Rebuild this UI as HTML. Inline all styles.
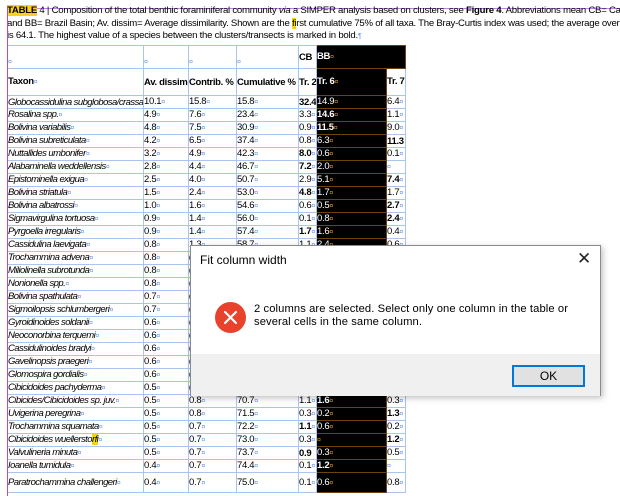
<!DOCTYPE html>
<html><head><meta charset="utf-8"><style>
*{margin:0;padding:0;box-sizing:border-box}
body{width:620px;height:496px;overflow:hidden;background:#fff;font-family:"Liberation Sans",Arial,sans-serif;color:#000;position:relative}
.cap{position:absolute;left:7px;top:5px;width:640px;font-size:9.6px;line-height:12.6px;letter-spacing:-0.25px;white-space:nowrap}
.hl{background:#f7d21c}
.vl{position:absolute;left:7px;top:8px;width:1px;height:488px;background:#a050e0}
.hlin{position:absolute;left:7px;top:8px;width:613px;height:1px;background:#c080f0}
table{position:absolute;left:7px;top:45px;width:398px;border-collapse:collapse;table-layout:fixed;font-size:9.5px;letter-spacing:-0.3px}
td{border:1px solid #a8c4f0;padding:0;white-space:nowrap;overflow:hidden;height:13px;line-height:11px;vertical-align:bottom}
td.t{font-style:italic;letter-spacing:-0.55px}
td.k{background:#000;color:#fff;border-color:#6b4410}
b{font-weight:bold}
.m{color:#6f9be8;font-size:7px}
.k .m{color:#d08a20}
.dlg{position:absolute;left:190px;top:245px;width:411px;height:151px;background:#fff;border:1px solid #8a8a8a;box-shadow:2px 2px 6px rgba(0,0,0,.25)}
.ttl{position:absolute;left:9px;top:7px;font-size:12px;color:#000}
.x{position:absolute;left:386px;top:3px;font-size:17px;color:#222}
.msg{position:absolute;left:63px;top:57px;font-size:11.2px;line-height:13px;color:#000;letter-spacing:0.1px}
.ic{position:absolute;left:24px;top:56px;width:31px;height:31px;border-radius:50%;background:#e8412c}
.foot{position:absolute;left:0;top:108px;width:409px;height:42px;background:#f0f0f0}
.ok{position:absolute;left:321px;top:11px;width:73px;height:22px;border:2px solid #0078d7;background:#e1e1e1;font-size:12px;text-align:center;line-height:18px}
</style></head><body>
<div class="hlin"></div>
<div class="cap"><span class="hl"><b>TABLE</b></span> 4 | Composition of the total benthic foraminiferal community <i>via</i> a SIMPER analysis based on clusters, see <b>Figure 4</b>. Abbreviations mean CB= Ca<br>and BB= Brazil Basin; Av. dissim= Average dissimilarity. Shown are the <span class="hl">fi</span>rst cumulative 75% of all taxa. The Bray-Curtis index was used; the average over<br>is 64.1. The highest value of a species between the clusters/transects is marked in bold.<span class="m">¶</span></div>
<table>
<colgroup><col style="width:136px"><col style="width:45px"><col style="width:48px"><col style="width:62px"><col style="width:18px"><col style="width:70px"><col style="width:19px"></colgroup>
<tr style="height:23px"><td><span class="m">¤</span></td><td><span class="m">¤</span></td><td><span class="m">¤</span></td><td><span class="m">¤</span></td><td style="vertical-align:middle"><b>CB</b></td><td class="k" colspan="2" style="vertical-align:middle"><b>BB</b><span class="m">¤</span></td></tr>
<tr style="height:27px"><td style="vertical-align:middle"><b>Taxon</b><span class="m">¤</span></td><td style="vertical-align:middle"><b>Av. dissim</b></td><td style="vertical-align:middle"><b>Contrib. %</b></td><td style="vertical-align:middle"><b>Cumulative %</b></td><td style="vertical-align:middle"><b>Tr. 2</b></td><td class="k" style="vertical-align:middle"><b>Tr. 6</b><span class="m">¤</span></td><td style="vertical-align:middle"><b>Tr. 7</b><span class="m">¤</span></td></tr>
<tr><td class="t">Globocassidulina subglobosa/crassa</td><td>10.1<span class="m">¤</span></td><td>15.8<span class="m">¤</span></td><td>15.8<span class="m">¤</span></td><td><b>32.4</b></td><td class="k">14.9<span class="m">¤</span></td><td>6.4<span class="m">¤</span></td></tr>
<tr><td class="t">Rosalina spp.<span class="m">¤</span></td><td>4.9<span class="m">¤</span></td><td>7.6<span class="m">¤</span></td><td>23.4<span class="m">¤</span></td><td>3.3<span class="m">¤</span></td><td class="k"><b>14.6</b><span class="m">¤</span></td><td>1.1<span class="m">¤</span></td></tr>
<tr><td class="t">Bolivina variabilis<span class="m">¤</span></td><td>4.8<span class="m">¤</span></td><td>7.5<span class="m">¤</span></td><td>30.9<span class="m">¤</span></td><td>0.9<span class="m">¤</span></td><td class="k"><b>11.5</b><span class="m">¤</span></td><td>9.0<span class="m">¤</span></td></tr>
<tr><td class="t">Bolivina subreticulata<span class="m">¤</span></td><td>4.2<span class="m">¤</span></td><td>6.5<span class="m">¤</span></td><td>37.4<span class="m">¤</span></td><td>0.8<span class="m">¤</span></td><td class="k">6.3<span class="m">¤</span></td><td><b>11.3</b></td></tr>
<tr><td class="t">Nuttallides umbonifer<span class="m">¤</span></td><td>3.2<span class="m">¤</span></td><td>4.9<span class="m">¤</span></td><td>42.3<span class="m">¤</span></td><td><b>8.0</b><span class="m">¤</span></td><td class="k">0.6<span class="m">¤</span></td><td>0.1<span class="m">¤</span></td></tr>
<tr><td class="t">Alabaminella weddellensis<span class="m">¤</span></td><td>2.8<span class="m">¤</span></td><td>4.4<span class="m">¤</span></td><td>46.7<span class="m">¤</span></td><td><b>7.2</b><span class="m">¤</span></td><td class="k">2.0<span class="m">¤</span></td><td><span class="m">¤</span></td></tr>
<tr><td class="t">Epistominella exigua<span class="m">¤</span></td><td>2.5<span class="m">¤</span></td><td>4.0<span class="m">¤</span></td><td>50.7<span class="m">¤</span></td><td>2.9<span class="m">¤</span></td><td class="k">5.1<span class="m">¤</span></td><td><b>7.4</b><span class="m">¤</span></td></tr>
<tr><td class="t">Bolivina striatula<span class="m">¤</span></td><td>1.5<span class="m">¤</span></td><td>2.4<span class="m">¤</span></td><td>53.0<span class="m">¤</span></td><td><b>4.8</b><span class="m">¤</span></td><td class="k">1.7<span class="m">¤</span></td><td>1.7<span class="m">¤</span></td></tr>
<tr><td class="t">Bolivina albatrossi<span class="m">¤</span></td><td>1.0<span class="m">¤</span></td><td>1.6<span class="m">¤</span></td><td>54.6<span class="m">¤</span></td><td>0.6<span class="m">¤</span></td><td class="k">0.5<span class="m">¤</span></td><td><b>2.7</b><span class="m">¤</span></td></tr>
<tr><td class="t">Sigmavirgulina tortuosa<span class="m">¤</span></td><td>0.9<span class="m">¤</span></td><td>1.4<span class="m">¤</span></td><td>56.0<span class="m">¤</span></td><td>0.1<span class="m">¤</span></td><td class="k">0.8<span class="m">¤</span></td><td><b>2.4</b><span class="m">¤</span></td></tr>
<tr><td class="t">Pyrgoella irregularis<span class="m">¤</span></td><td>0.9<span class="m">¤</span></td><td>1.4<span class="m">¤</span></td><td>57.4<span class="m">¤</span></td><td><b>1.7</b><span class="m">¤</span></td><td class="k">1.6<span class="m">¤</span></td><td>0.4<span class="m">¤</span></td></tr>
<tr><td class="t">Cassidulina laevigata<span class="m">¤</span></td><td>0.8<span class="m">¤</span></td><td>1.3<span class="m">¤</span></td><td>58.7<span class="m">¤</span></td><td>1.1<span class="m">¤</span></td><td class="k">2.4<span class="m">¤</span></td><td>0.6<span class="m">¤</span></td></tr>
<tr><td class="t">Trochammina advena<span class="m">¤</span></td><td>0.8<span class="m">¤</span></td><td>0.8</td><td>59.5</td><td>0.4</td><td class="k">1.3</td><td>0.6</td></tr>
<tr><td class="t">Miliolinella subrotunda<span class="m">¤</span></td><td>0.8<span class="m">¤</span></td><td>0.8</td><td>60.3</td><td>0.4</td><td class="k">1.3</td><td>0.6</td></tr>
<tr><td class="t">Nonionella spp.<span class="m">¤</span></td><td>0.8<span class="m">¤</span></td><td>0.8</td><td>61.1</td><td>0.4</td><td class="k">1.3</td><td>0.6</td></tr>
<tr><td class="t">Bolivina spathulata<span class="m">¤</span></td><td>0.7<span class="m">¤</span></td><td>0.7</td><td>62.0</td><td>0.4</td><td class="k">1.3</td><td>0.6</td></tr>
<tr><td class="t">Sigmoilopsis schlumbergeri<span class="m">¤</span></td><td>0.7<span class="m">¤</span></td><td>0.7</td><td>63.0</td><td>0.4</td><td class="k">1.3</td><td>0.6</td></tr>
<tr><td class="t">Gyroidinoides soldanii<span class="m">¤</span></td><td>0.6<span class="m">¤</span></td><td>0.6</td><td>64.0</td><td>0.4</td><td class="k">1.3</td><td>0.6</td></tr>
<tr><td class="t">Neoconorbina terquemi<span class="m">¤</span></td><td>0.6<span class="m">¤</span></td><td>0.6</td><td>65.0</td><td>0.4</td><td class="k">1.3</td><td>0.6</td></tr>
<tr><td class="t">Cassidulinoides bradyi<span class="m">¤</span></td><td>0.6<span class="m">¤</span></td><td>0.6</td><td>66.0</td><td>0.4</td><td class="k">1.3</td><td>0.6</td></tr>
<tr><td class="t">Gavelinopsis praegeri<span class="m">¤</span></td><td>0.6<span class="m">¤</span></td><td>0.6</td><td>67.0</td><td>0.4</td><td class="k">1.3</td><td>0.6</td></tr>
<tr><td class="t">Glomospira gordialis<span class="m">¤</span></td><td>0.6<span class="m">¤</span></td><td>0.6</td><td>68.0</td><td>0.4</td><td class="k">1.3</td><td>0.6</td></tr>
<tr><td class="t">Cibicidoides pachyderma<span class="m">¤</span></td><td>0.5<span class="m">¤</span></td><td>0.5</td><td>69.0</td><td>0.4</td><td class="k">1.3</td><td>0.6</td></tr>
<tr><td class="t">Cibicides/Cibicidoides sp. juv.<span class="m">¤</span></td><td>0.5<span class="m">¤</span></td><td>0.8<span class="m">¤</span></td><td>70.7<span class="m">¤</span></td><td>1.1<span class="m">¤</span></td><td class="k"><b>1.6</b><span class="m">¤</span></td><td>0.3<span class="m">¤</span></td></tr>
<tr><td class="t">Uvigerina peregrina<span class="m">¤</span></td><td>0.5<span class="m">¤</span></td><td>0.8<span class="m">¤</span></td><td>71.5<span class="m">¤</span></td><td>0.3<span class="m">¤</span></td><td class="k">0.2<span class="m">¤</span></td><td><b>1.3</b><span class="m">¤</span></td></tr>
<tr><td class="t">Trochammina squamata<span class="m">¤</span></td><td>0.5<span class="m">¤</span></td><td>0.7<span class="m">¤</span></td><td>72.2<span class="m">¤</span></td><td><b>1.1</b><span class="m">¤</span></td><td class="k">0.6<span class="m">¤</span></td><td>0.2<span class="m">¤</span></td></tr>
<tr><td class="t">Cibicidoides wuellersto<span class="hl">rfi</span><span class="m">¤</span></td><td>0.5<span class="m">¤</span></td><td>0.7<span class="m">¤</span></td><td>73.0<span class="m">¤</span></td><td>0.3<span class="m">¤</span></td><td class="k"><span class="m">¤</span></td><td><b>1.2</b><span class="m">¤</span></td></tr>
<tr><td class="t">Valvulineria minuta<span class="m">¤</span></td><td>0.5<span class="m">¤</span></td><td>0.7<span class="m">¤</span></td><td>73.7<span class="m">¤</span></td><td><b>0.9</b></td><td class="k">0.3<span class="m">¤</span></td><td>0.5<span class="m">¤</span></td></tr>
<tr><td class="t">Ioanella tumidula<span class="m">¤</span></td><td>0.4<span class="m">¤</span></td><td>0.7<span class="m">¤</span></td><td>74.4<span class="m">¤</span></td><td>0.1<span class="m">¤</span></td><td class="k"><b>1.2</b><span class="m">¤</span></td><td><span class="m">¤</span></td></tr>
<tr style="height:20px"><td class="t" style="vertical-align:middle">Paratrochammina challengeri<span class="m">¤</span></td><td style="vertical-align:middle">0.4<span class="m">¤</span></td><td style="vertical-align:middle">0.7<span class="m">¤</span></td><td style="vertical-align:middle">75.0<span class="m">¤</span></td><td style="vertical-align:middle">0.1<span class="m">¤</span></td><td class="k" style="vertical-align:middle">0.6<span class="m">¤</span></td><td style="vertical-align:middle">0.8<span class="m">¤</span></td></tr>
</table>
<div class="vl"></div>
<div class="dlg">
<div class="ttl">Fit column width</div>
<div class="x">✕</div>
<div class="ic"><svg width="31" height="31" viewBox="0 0 31 31"><path d="M10 10L21 21M21 10L10 21" stroke="#fff" stroke-width="2.2" stroke-linecap="round"/></svg></div>
<div class="msg">2 columns are selected. Select only one column in the table or<br>several cells in the same column.</div>
<div class="foot"><div class="ok">OK</div></div>
</div>
</body></html>
